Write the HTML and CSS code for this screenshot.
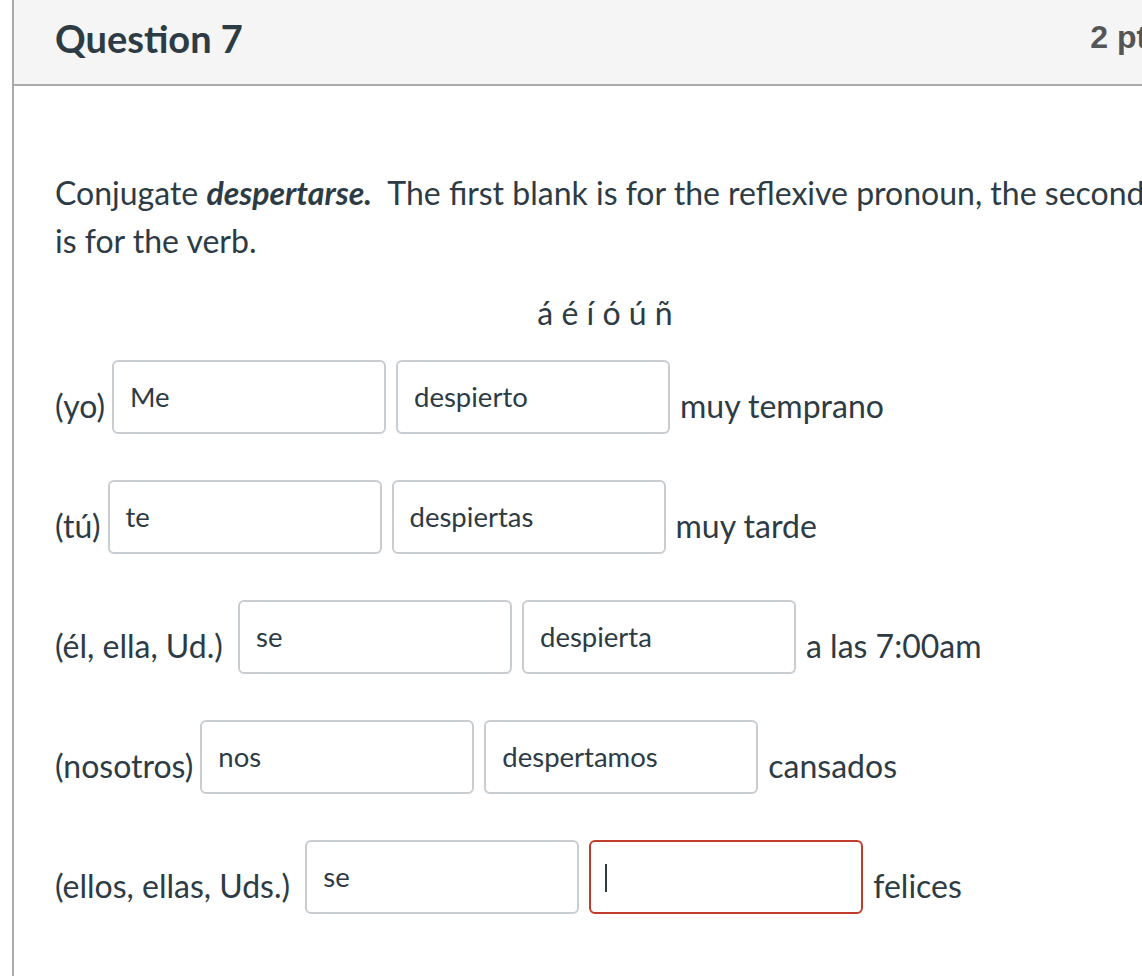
FILE: index.html
```html
<html>
  <head>
    <title>Question 7</title>
    <link rel="stylesheet" href="styles.css">
  </head>
  <body>
    <div class="question">
      <div class="question-header">
        <h2 class="question-title">Question 7</h2>
        <span class="question-points">2 pts</span>
      </div>
      <div class="question-body">
        <p class="prompt">Conjugate <b><i>despertarse.</i></b>&nbsp; The first blank is for the reflexive pronoun, the second is for the verb.</p>
        <p class="accents">á é í ó ú ñ</p>

        <div class="row">
          <span class="label">(yo)</span>
          <div class="blank">Me</div>
          <div class="blank">despierto</div>
          <span class="label">muy temprano</span>
        </div>
        <div class="row">
          <span class="label">(tú)</span>
          <div class="blank">te</div>
          <div class="blank">despiertas</div>
          <span class="label">muy tarde</span>
        </div>
        <div class="row">
          <span class="label">(él, ella, Ud.)&nbsp;</span>
          <div class="blank">se</div>
          <div class="blank">despierta</div>
          <span class="label">a las 7:00am</span>
        </div>
        <div class="row">
          <span class="label">(nosotros)</span>
          <div class="blank">nos</div>
          <div class="blank">despertamos</div>
          <span class="label">cansados</span>
        </div>
        <div class="row">
          <span class="label">(ellos, ellas, Uds.)&nbsp;</span>
          <div class="blank">se</div>
          <div class="blank focused"><span class="caret"></span></div>
          <span class="label">felices</span>
        </div>
      </div>
    </div>
  </body>
</html>
```

FILE: styles.css
```css
body {
  margin: 0;
  overflow: hidden;
  font-family: Lato, "Open Sans", sans-serif;
  color: #2d3b45;
  background: #fff;
}
.question {
  margin-left: 12px;
  width: 1192px;
  min-height: 976px;
  border-left: 2px solid #aaa;
}
.question-header {
  display: flex;
  justify-content: space-between;
  align-items: center;
  height: 86px;
  padding: 0 41px 9px;
  box-sizing: border-box;
  background: #f5f5f5;
  border-bottom: 2px solid #aaa;
}
.question-title {
  margin: 0;
  font-size: 38px;
  font-weight: 700;
}
.question-points {
  font-family: "Liberation Sans", Arial, sans-serif;
  font-weight: 700;
  font-size: 32px;
  color: #555;
}
.question-body {
  padding: 83px 41px 0;
}
.prompt {
  margin: 0;
  width: 1105px;
  font-size: 32px;
  line-height: 48px;
}
.accents {
  margin: 26px 0 0;
  text-align: center;
  width: 1100px;
  font-size: 32px;
  line-height: 44px;
}
.row {
  display: flex;
  align-items: center;
  gap: 7px;
  margin-top: 46px;
  font-size: 32px;
}
.accents + .row {
  margin-top: 25px;
}
.label {
  padding-top: 16px;
}
.blank {
  box-sizing: border-box;
  width: 274px;
  height: 74px;
  padding: 0 16px 2px;
  border: 2px solid #c7cdd1;
  border-radius: 6px;
  font-size: 27.5px;
  display: flex;
  align-items: center;
}
.blank + .blank,
.blank + .label {
  margin-left: 3px;
}
.focused {
  border-color: #c23c2d;
}
.caret {
  display: block;
  width: 2px;
  height: 28px;
  margin: 4px 0 0 -2px;
  background: #2d3b45;
}
```
